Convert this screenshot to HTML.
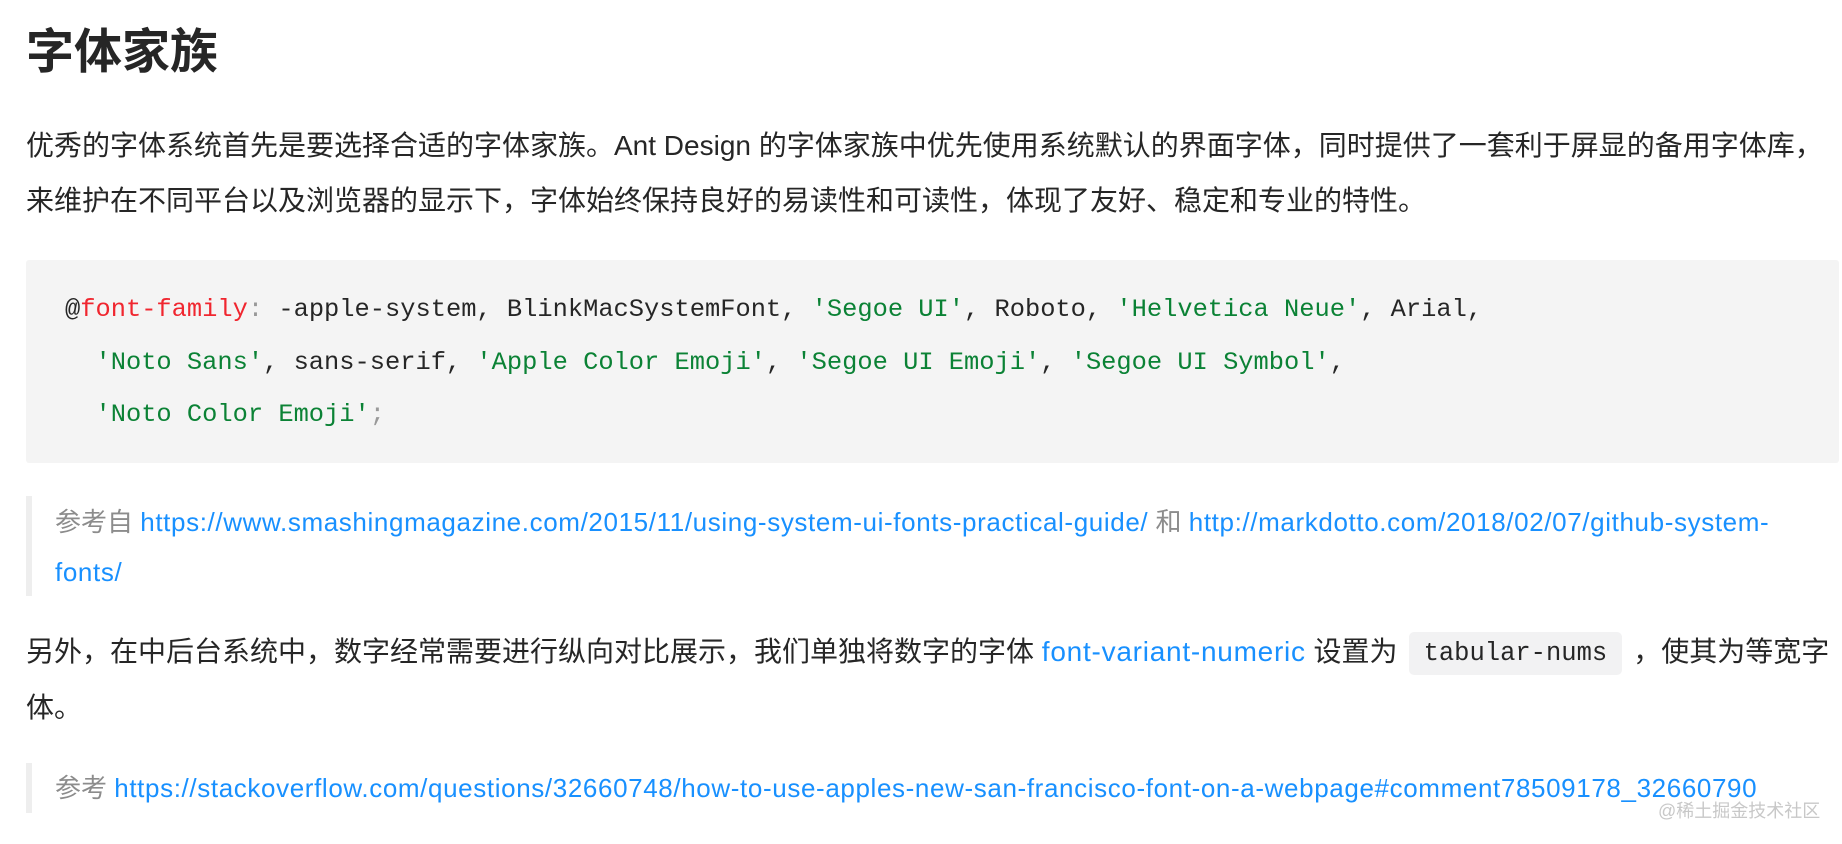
<!DOCTYPE html>
<html><head><meta charset="utf-8"><style>
html,body{margin:0;padding:0;background:#fff;width:1842px;height:844px;overflow:hidden;position:relative}
body{font-family:"Liberation Sans","Noto Sans CJK SC",sans-serif;color:#262626}
.a{position:absolute;white-space:nowrap}
h1{position:absolute;left:26px;top:20px;margin:0;font-size:48px;line-height:66px;font-weight:bold;color:#262626}
.p{font-size:28px;line-height:55px}
.code{position:absolute;left:26px;top:260px;width:1813px;height:203px;background:#f4f4f4;border-radius:3px}
.cl{position:absolute;font-family:"Liberation Mono",monospace;font-size:25.4px;line-height:52px;white-space:pre;color:#262626}
.r{color:#f0262f}.g{color:#0b8235}.x{color:#999}
.bq{position:absolute;left:26px;width:6px;background:#eeeeee}
.q{font-size:26px;color:#8c8c8c}
.q a{letter-spacing:0.62px}
a{color:#1890ff;text-decoration:none}
.p a{letter-spacing:0.75px}
.ic{display:inline-block;background:#f2f2f3;border-radius:5px;font-family:"Liberation Mono",monospace;font-size:25.5px;line-height:43px;padding:0 15px;margin:0 11px;vertical-align:middle}
</style></head><body>
<h1>字体家族</h1>
<div class="a p" style="left:26px;top:118px">优秀的字体系统首先是要选择合适的字体家族。Ant Design 的字体家族中优先使用系统默认的界面字体，同时提供了一套利于屏显的备用字体库，</div>
<div class="a p" style="left:26px;top:173px">来维护在不同平台以及浏览器的显示下，字体始终保持良好的易读性和可读性，体现了友好、稳定和专业的特性。</div>
<div class="code"></div>
<div class="cl" style="left:65px;top:284px"><span>@</span><span class="r">font-family</span><span class="x">:</span> -apple-system, BlinkMacSystemFont, <span class="g">'Segoe UI'</span>, Roboto, <span class="g">'Helvetica Neue'</span>, Arial,</div>
<div class="cl" style="left:65px;top:337px">  <span class="g">'Noto Sans'</span>, sans-serif, <span class="g">'Apple Color Emoji'</span>, <span class="g">'Segoe UI Emoji'</span>, <span class="g">'Segoe UI Symbol'</span>,</div>
<div class="cl" style="left:65px;top:389px">  <span class="g">'Noto Color Emoji'</span><span class="x">;</span></div>
<div class="bq" style="top:496px;height:100px"></div>
<div class="a q" style="left:55px;top:497px;line-height:50px">参考自 <a>https://www.smashingmagazine.com/2015/11/using-system-ui-fonts-practical-guide/</a> 和 <a>http://markdotto.com/2018/02/07/github-system-</a></div>
<div class="a q" style="left:55px;top:547px;line-height:50px"><a>fonts/</a></div>
<div class="a p" style="left:26px;top:624px">另外，在中后台系统中，数字经常需要进行纵向对比展示，我们单独将数字的字体 <a>font-variant-numeric</a> 设置为<span class="ic">tabular-nums</span>，使其为等宽字</div>
<div class="a p" style="left:26px;top:680px">体。</div>
<div class="bq" style="top:763px;height:50px"></div>
<div class="a q" style="left:55px;top:763px;line-height:50px">参考 <a>https://stackoverflow.com/questions/32660748/how-to-use-apples-new-san-francisco-font-on-a-webpage#comment78509178_32660790</a></div>
<div class="a" style="left:1658px;top:798px;font-size:18px;line-height:26px;color:#c8c8c8">@稀土掘金技术社区</div>
</body></html>
